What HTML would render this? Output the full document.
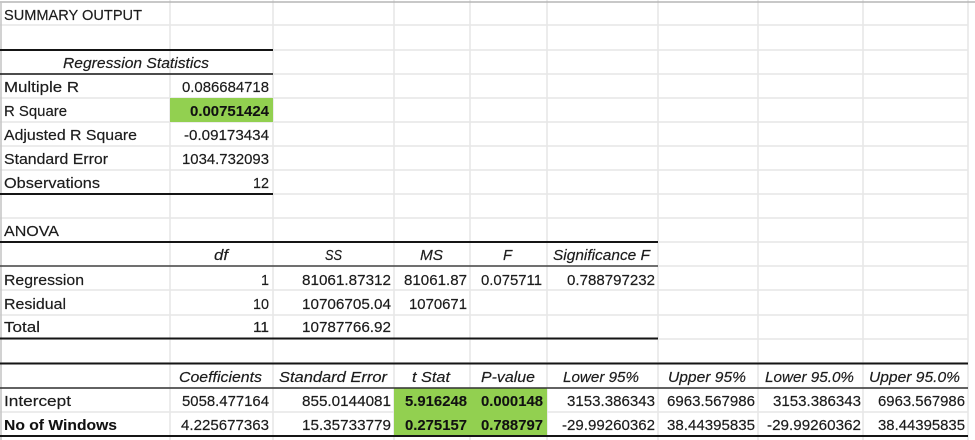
<!DOCTYPE html>
<html><head><meta charset="utf-8"><style>
html,body{margin:0;padding:0;background:#fff;width:975px;height:440px;overflow:hidden}
svg{display:block}
text{font-family:"Liberation Sans",sans-serif;font-size:15px;fill:#1c1c1c;stroke:#1c1c1c;stroke-width:.18}
.t{filter:blur(.3px)}
.i{font-style:italic}.b{font-weight:bold;fill:#111;stroke-width:.1}
.g line{stroke:#e6e6e6;stroke-width:1.5}
.k line{stroke:#151515}
</style></head><body>
<svg width="975" height="440" viewBox="0 0 975 440" xmlns="http://www.w3.org/2000/svg">
<g class="g">
<line x1="170" y1="0" x2="170" y2="440"/><line x1="273" y1="0" x2="273" y2="440"/><line x1="394" y1="0" x2="394" y2="440"/><line x1="470" y1="0" x2="470" y2="440"/><line x1="547" y1="0" x2="547" y2="440"/><line x1="658" y1="0" x2="658" y2="440"/><line x1="758" y1="0" x2="758" y2="440"/><line x1="863" y1="0" x2="863" y2="440"/><line x1="968" y1="0" x2="968" y2="440"/>
<line x1="0" y1="25" x2="968" y2="25"/><line x1="0" y1="50" x2="968" y2="50"/><line x1="0" y1="74" x2="968" y2="74"/><line x1="0" y1="98" x2="968" y2="98"/><line x1="0" y1="122" x2="968" y2="122"/><line x1="0" y1="146" x2="968" y2="146"/><line x1="0" y1="170" x2="968" y2="170"/><line x1="0" y1="194" x2="968" y2="194"/><line x1="0" y1="218" x2="968" y2="218"/><line x1="0" y1="242" x2="968" y2="242"/><line x1="0" y1="266" x2="968" y2="266"/><line x1="0" y1="290" x2="968" y2="290"/><line x1="0" y1="315" x2="968" y2="315"/><line x1="0" y1="339" x2="968" y2="339"/><line x1="0" y1="363" x2="968" y2="363"/><line x1="0" y1="388" x2="968" y2="388"/><line x1="0" y1="412" x2="968" y2="412"/><line x1="0" y1="436" x2="968" y2="436"/>
</g>
<rect x="170" y="98" width="103" height="24" fill="#92d050"/>
<rect x="394" y="388" width="153" height="48" fill="#92d050"/>
<line x1="0" y1="2" x2="975" y2="2" stroke="#b5b5b5" stroke-width="1.5"/>
<line x1="1" y1="2" x2="1" y2="440" stroke="#c4c4c4" stroke-width="1.5"/>
<g class="k">
<line x1="0" y1="50" x2="273" y2="50" stroke-width="2"/>
<line x1="0" y1="74" x2="273" y2="74" stroke-width="1.5"/>
<line x1="0" y1="194" x2="273" y2="194" stroke-width="2"/>
<line x1="0" y1="242" x2="658" y2="242" stroke-width="2"/>
<line x1="0" y1="266" x2="658" y2="266" stroke-width="1.5" style="stroke:#444"/>
<line x1="0" y1="338.5" x2="658" y2="338.5" stroke-width="2"/>
<line x1="0" y1="363.5" x2="968" y2="363.5" stroke-width="2"/>
<line x1="0" y1="388" x2="968" y2="388" stroke-width="1.5" style="stroke:#333"/>
<line x1="0" y1="436" x2="968" y2="436" stroke-width="2"/>
</g>
<g class="t">
<text x="4" y="20" textLength="138" lengthAdjust="spacingAndGlyphs">SUMMARY OUTPUT</text>
<text class="i" x="63" y="68" textLength="146" lengthAdjust="spacingAndGlyphs">Regression Statistics</text>
<text x="4" y="92" textLength="75" lengthAdjust="spacingAndGlyphs">Multiple R</text>
<text x="182" y="92" textLength="87" lengthAdjust="spacingAndGlyphs">0.086684718</text>
<text x="4" y="116" textLength="63" lengthAdjust="spacingAndGlyphs">R Square</text>
<text class="b" x="190" y="116" textLength="79" lengthAdjust="spacingAndGlyphs">0.00751424</text>
<text x="4" y="140" textLength="133" lengthAdjust="spacingAndGlyphs">Adjusted R Square</text>
<text x="184" y="140" textLength="85" lengthAdjust="spacingAndGlyphs">-0.09173434</text>
<text x="4" y="164" textLength="104" lengthAdjust="spacingAndGlyphs">Standard Error</text>
<text x="182" y="164" textLength="87" lengthAdjust="spacingAndGlyphs">1034.732093</text>
<text x="4" y="188" textLength="96" lengthAdjust="spacingAndGlyphs">Observations</text>
<text x="253" y="188" textLength="16" lengthAdjust="spacingAndGlyphs">12</text>
<text x="4" y="236" textLength="55" lengthAdjust="spacingAndGlyphs">ANOVA</text>
<text class="i" x="214" y="260" textLength="14" lengthAdjust="spacingAndGlyphs">df</text>
<text class="i" x="325" y="260" textLength="17" lengthAdjust="spacingAndGlyphs">SS</text>
<text class="i" x="420" y="260" textLength="23" lengthAdjust="spacingAndGlyphs">MS</text>
<text class="i" x="503" y="260" textLength="9" lengthAdjust="spacingAndGlyphs">F</text>
<text class="i" x="553" y="260" textLength="97" lengthAdjust="spacingAndGlyphs">Significance F</text>
<text x="4" y="285" textLength="80" lengthAdjust="spacingAndGlyphs">Regression</text>
<text x="261" y="285" textLength="8" lengthAdjust="spacingAndGlyphs">1</text>
<text x="302" y="285" textLength="89" lengthAdjust="spacingAndGlyphs">81061.87312</text>
<text x="404" y="285" textLength="63" lengthAdjust="spacingAndGlyphs">81061.87</text>
<text x="481" y="285" textLength="61" lengthAdjust="spacingAndGlyphs">0.075711</text>
<text x="567" y="285" textLength="88" lengthAdjust="spacingAndGlyphs">0.788797232</text>
<text x="4" y="309" textLength="62" lengthAdjust="spacingAndGlyphs">Residual</text>
<text x="253" y="309" textLength="16" lengthAdjust="spacingAndGlyphs">10</text>
<text x="302" y="309" textLength="89" lengthAdjust="spacingAndGlyphs">10706705.04</text>
<text x="409" y="309" textLength="58" lengthAdjust="spacingAndGlyphs">1070671</text>
<text x="4" y="332" textLength="36" lengthAdjust="spacingAndGlyphs">Total</text>
<text x="253" y="332" textLength="16" lengthAdjust="spacingAndGlyphs">11</text>
<text x="302" y="332" textLength="89" lengthAdjust="spacingAndGlyphs">10787766.92</text>
<text class="i" x="179" y="382" textLength="83" lengthAdjust="spacingAndGlyphs">Coefficients</text>
<text class="i" x="279" y="382" textLength="108" lengthAdjust="spacingAndGlyphs">Standard Error</text>
<text class="i" x="412" y="382" textLength="38" lengthAdjust="spacingAndGlyphs">t Stat</text>
<text class="i" x="481" y="382" textLength="54" lengthAdjust="spacingAndGlyphs">P-value</text>
<text class="i" x="563" y="382" textLength="76" lengthAdjust="spacingAndGlyphs">Lower 95%</text>
<text class="i" x="668" y="382" textLength="78" lengthAdjust="spacingAndGlyphs">Upper 95%</text>
<text class="i" x="765" y="382" textLength="89" lengthAdjust="spacingAndGlyphs">Lower 95.0%</text>
<text class="i" x="869" y="382" textLength="91" lengthAdjust="spacingAndGlyphs">Upper 95.0%</text>
<text x="4" y="406" textLength="67" lengthAdjust="spacingAndGlyphs">Intercept</text>
<text x="182" y="406" textLength="87" lengthAdjust="spacingAndGlyphs">5058.477164</text>
<text x="302" y="406" textLength="89" lengthAdjust="spacingAndGlyphs">855.0144081</text>
<text class="b" x="405" y="406" textLength="62" lengthAdjust="spacingAndGlyphs">5.916248</text>
<text class="b" x="481" y="406" textLength="62" lengthAdjust="spacingAndGlyphs">0.000148</text>
<text x="567" y="406" textLength="88" lengthAdjust="spacingAndGlyphs">3153.386343</text>
<text x="667" y="406" textLength="88" lengthAdjust="spacingAndGlyphs">6963.567986</text>
<text x="773" y="406" textLength="88" lengthAdjust="spacingAndGlyphs">3153.386343</text>
<text x="878" y="406" textLength="87" lengthAdjust="spacingAndGlyphs">6963.567986</text>
<text class="b" x="4" y="430" textLength="113" lengthAdjust="spacingAndGlyphs">No of Windows</text>
<text x="181" y="430" textLength="88" lengthAdjust="spacingAndGlyphs">4.225677363</text>
<text x="302" y="430" textLength="89" lengthAdjust="spacingAndGlyphs">15.35733779</text>
<text class="b" x="405" y="430" textLength="62" lengthAdjust="spacingAndGlyphs">0.275157</text>
<text class="b" x="481" y="430" textLength="62" lengthAdjust="spacingAndGlyphs">0.788797</text>
<text x="562" y="430" textLength="93" lengthAdjust="spacingAndGlyphs">-29.99260362</text>
<text x="667" y="430" textLength="88" lengthAdjust="spacingAndGlyphs">38.44395835</text>
<text x="767" y="430" textLength="94" lengthAdjust="spacingAndGlyphs">-29.99260362</text>
<text x="878" y="430" textLength="87" lengthAdjust="spacingAndGlyphs">38.44395835</text>
</g>
</svg>
</body></html>
